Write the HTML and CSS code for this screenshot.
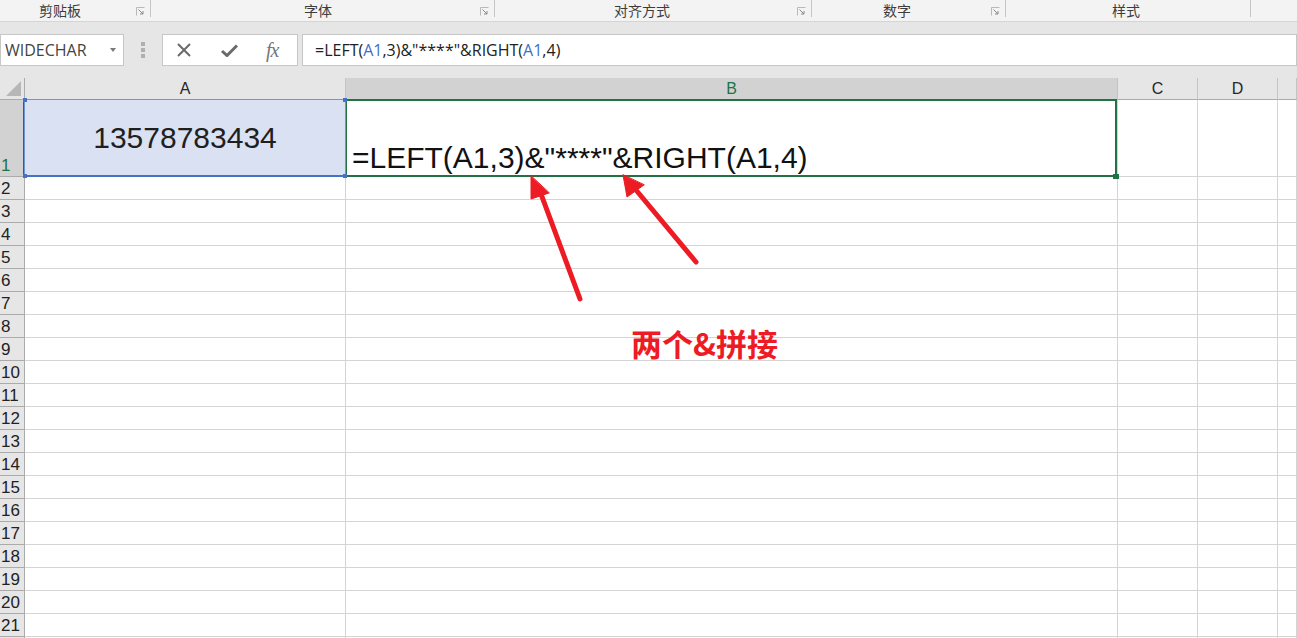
FILE: index.html
```html
<!DOCTYPE html>
<html lang="zh-CN">
<head>
<meta charset="utf-8">
<title>Excel</title>
<link rel="stylesheet" href="styles.css">
</head>
<body>
<div class="app">
  <div class="ribbon">
    <div class="grp g1"><span class="lbl">剪贴板</span><svg class="launch" viewBox="0 0 9 9"><path d="M0.5 8.5V0.5H8.5" fill="none" stroke="#b9b9b9"/><path d="M2.5 2.5L7 7M7 4V7H4" fill="none" stroke="#8a8a8a"/></svg></div>
    <div class="grp g2"><span class="lbl">字体</span><svg class="launch" viewBox="0 0 9 9"><path d="M0.5 8.5V0.5H8.5" fill="none" stroke="#b9b9b9"/><path d="M2.5 2.5L7 7M7 4V7H4" fill="none" stroke="#8a8a8a"/></svg></div>
    <div class="grp g3"><span class="lbl">对齐方式</span><svg class="launch" viewBox="0 0 9 9"><path d="M0.5 8.5V0.5H8.5" fill="none" stroke="#b9b9b9"/><path d="M2.5 2.5L7 7M7 4V7H4" fill="none" stroke="#8a8a8a"/></svg></div>
    <div class="grp g4"><span class="lbl">数字</span><svg class="launch" viewBox="0 0 9 9"><path d="M0.5 8.5V0.5H8.5" fill="none" stroke="#b9b9b9"/><path d="M2.5 2.5L7 7M7 4V7H4" fill="none" stroke="#8a8a8a"/></svg></div>
    <div class="grp g5"><span class="lbl">样式</span></div>
  </div>
  <div class="band"></div>
  <div class="fbar">
    <div class="namebox"><span>WIDECHAR</span><span class="dd"></span></div>
    <div class="grip"><i></i><i></i><i></i></div>
    <div class="fxbox">
      <svg class="ico-x" viewBox="0 0 14 14"><path d="M1 1L13 13M13 1L1 13" stroke="#6a6a6a" stroke-width="2"/></svg>
      <svg class="ico-ok" viewBox="0 0 17 13"><path d="M1 7L6 11.5L16 1.5" fill="none" stroke="#6a6a6a" stroke-width="3"/></svg>
      <span class="fx">fx</span>
    </div>
    <div class="finput">=LEFT(<span class="ref">A1</span>,3)&amp;"****"&amp;RIGHT(<span class="ref">A1</span>,4)</div>
  </div>
  <div class="band"></div>
  <div class="sheet">
    <div class="row hdr"><b class="corner"></b><i>A</i><i class="on">B</i><i>C</i><i>D</i><i></i></div>
    <div class="row r1">
      <b class="on">1</b>
      <i class="a1">13578783434<span class="sel"><u class="h tl"></u><u class="h tr"></u><u class="h bl"></u><u class="h br"></u></span></i>
      <i class="b1">=LEFT(A1,3)&amp;"****"&amp;RIGHT(A1,4)<span class="act"><u class="fill"></u></span></i>
      <i></i><i></i><i></i>
    </div>
    <div class="row"><b>2</b><i></i><i></i><i></i><i></i><i></i></div>
    <div class="row"><b>3</b><i></i><i></i><i></i><i></i><i></i></div>
    <div class="row"><b>4</b><i></i><i></i><i></i><i></i><i></i></div>
    <div class="row"><b>5</b><i></i><i></i><i></i><i></i><i></i></div>
    <div class="row"><b>6</b><i></i><i></i><i></i><i></i><i></i></div>
    <div class="row"><b>7</b><i></i><i></i><i></i><i></i><i></i></div>
    <div class="row"><b>8</b><i></i><i></i><i></i><i></i><i></i></div>
    <div class="row"><b>9</b><i></i><i></i><i></i><i></i><i></i></div>
    <div class="row"><b>10</b><i></i><i></i><i></i><i></i><i></i></div>
    <div class="row"><b>11</b><i></i><i></i><i></i><i></i><i></i></div>
    <div class="row"><b>12</b><i></i><i></i><i></i><i></i><i></i></div>
    <div class="row"><b>13</b><i></i><i></i><i></i><i></i><i></i></div>
    <div class="row"><b>14</b><i></i><i></i><i></i><i></i><i></i></div>
    <div class="row"><b>15</b><i></i><i></i><i></i><i></i><i></i></div>
    <div class="row"><b>16</b><i></i><i></i><i></i><i></i><i></i></div>
    <div class="row"><b>17</b><i></i><i></i><i></i><i></i><i></i></div>
    <div class="row"><b>18</b><i></i><i></i><i></i><i></i><i></i></div>
    <div class="row"><b>19</b><i></i><i></i><i></i><i></i><i></i></div>
    <div class="row"><b>20</b><i></i><i></i><i></i><i></i><i></i></div>
    <div class="row"><b>21</b><i></i><i></i><i></i><i></i><i></i></div>
    <div class="row"><b></b><i></i><i></i><i></i><i></i><i></i></div>
  </div>
  <svg class="arrows" viewBox="0 0 1297 638" width="1297" height="638">
    <g stroke="#ed1c24" stroke-width="5" stroke-linecap="round" fill="#ed1c24">
      <line x1="580" y1="299" x2="541" y2="194"/>
      <polygon points="531,176 531,199 549,193" stroke-width="1" stroke-linejoin="round"/>
      <line x1="696" y1="262" x2="636" y2="190"/>
      <polygon points="623,175 627,197 644,185" stroke-width="1" stroke-linejoin="round"/>
    </g>
  </svg>
  <div class="note">两个&amp;拼接</div>
</div>
</body>
</html>
```
FILE: styles.css
```css
html, body {
  margin: 0;
  padding: 0;
}
body {
  width: 1297px;
  height: 638px;
  overflow: hidden;
  font-family: "Open Sans", "Noto Sans CJK SC", sans-serif;
}
.app {
  position: relative;
  width: 1297px;
  height: 638px;
  background: #e6e6e6;
  overflow: hidden;
}

/* ribbon group labels */
.ribbon {
  display: flex;
  height: 21px;
  background: #f3f3f3;
  border-bottom: 1px solid #d5d5d5;
}
.grp {
  display: grid;
  height: 21px;
  background: linear-gradient(#c6c6c6, #c6c6c6) no-repeat right top / 1px 17px;
}
.grp > * {
  grid-area: 1 / 1;
}
.lbl {
  font: 14px/20px "Noto Sans CJK SC", sans-serif;
  color: #3c3c3c;
  text-align: center;
}
.launch {
  justify-self: end;
  align-self: start;
  width: 9px;
  height: 9px;
  margin: 7px 6px 0 0;
}
.g1 { width: 151px; }
.g1 .lbl { padding-right: 31px; }
.g2 { width: 344px; }
.g2 .lbl { padding-right: 10px; }
.g3 { width: 317px; }
.g3 .lbl { padding-right: 23px; }
.g4 { width: 194px; }
.g4 .lbl { padding-right: 24px; }
.g5 { width: 245px; }
.g5 .lbl { padding-right: 5px; }

.band {
  height: 12px;
}

/* formula bar */
.fbar {
  display: flex;
  height: 32px;
}
.namebox, .fxbox, .finput {
  background: #fff;
  border: 1px solid #c6c6c6;
  box-sizing: border-box;
  height: 32px;
}
.namebox {
  width: 124px;
  display: flex;
  align-items: center;
  justify-content: space-between;
  padding: 0 7px 0 4px;
  font-size: 16px;
  color: #444;
}
.dd {
  width: 0;
  height: 0;
  border-left: 3.5px solid transparent;
  border-right: 3.5px solid transparent;
  border-top: 4px solid #7a7a7a;
}
.grip {
  width: 38px;
  display: flex;
  flex-direction: column;
  align-items: center;
  justify-content: center;
  gap: 2px;
}
.grip i {
  width: 4px;
  height: 4px;
  background: #b0b0b0;
}
.fxbox {
  width: 136px;
  display: flex;
  align-items: center;
  padding-left: 14px;
}
.ico-x {
  width: 14px;
  height: 14px;
}
.ico-ok {
  width: 17px;
  height: 13px;
  margin-left: 30px;
}
.fx {
  margin-left: 28px;
  font: italic 20px "Liberation Serif", serif;
  color: #777;
  letter-spacing: -1px;
}
.finput {
  flex: 1;
  margin-left: 4px;
  display: flex;
  align-items: center;
  padding-left: 12px;
  font-size: 16px;
  color: #222;
  white-space: pre;
}
.ref {
  color: #3f6fc2;
}

/* sheet */
.sheet {
  background: #fff;
}
.row {
  display: grid;
  grid-template-columns: 25px 321px 772px 80px 80px 1fr;
  height: 23px;
}
.row > * {
  box-sizing: border-box;
  border-right: 1px solid #d4d4d4;
  border-bottom: 1px solid #d4d4d4;
  font-style: normal;
  font-weight: normal;
}
.row > b {
  background: #e6e6e6;
  border-right-color: #ababab;
  border-bottom-color: #ababab;
  font: 17px/1 "Liberation Sans", sans-serif;
  color: #222;
  display: flex;
  align-items: flex-end;
  padding: 0 0 2px 1px;
}
.hdr {
  height: 22px;
}
.hdr > i {
  background: #e6e6e6;
  border-right-color: #c4c4c4;
  border-bottom-color: #ababab;
  font: 16px/21px "Liberation Sans", sans-serif;
  color: #262626;
  text-align: center;
}
.hdr > i.on {
  background: #d2d2d2;
  color: #217346;
}
.hdr > b.corner {
  position: relative;
}
.corner::after {
  content: "";
  position: absolute;
  right: 3px;
  bottom: 3px;
  width: 15px;
  height: 15px;
  background: #b7b7b7;
  clip-path: polygon(100% 0, 100% 100%, 0 100%);
}
.r1 {
  height: 77px;
}
.r1 > b.on {
  background: #d2d2d2;
  color: #217346;
  border-right: 2px solid #217346;
}
.a1 {
  position: relative;
  background: #d9e1f2;
  display: flex;
  align-items: center;
  justify-content: center;
  font: 30px "Liberation Sans", sans-serif;
  color: #1f1f1f;
}
.sel {
  position: absolute;
  top: -1px;
  left: -1px;
  right: -1px;
  bottom: -1px;
  border: 1px solid #6f95d6;
  border-bottom: 2px solid #4472c4;
  z-index: 3;
}
.h {
  position: absolute;
  width: 4px;
  height: 4px;
  background: #4472c4;
}
.tl { left: -2px; top: -2px; }
.tr { right: -2px; top: -2px; }
.bl { left: -2px; bottom: -3px; }
.br { right: -2px; bottom: -3px; }
.b1 {
  position: relative;
  display: flex;
  align-items: flex-end;
  padding: 0 0 3px 6px;
  font: 30px/1 "Liberation Sans", sans-serif;
  color: #111;
  white-space: pre;
}
.act {
  position: absolute;
  top: -1px;
  left: -1px;
  right: 0;
  bottom: -1px;
  border: 2px solid #217346;
  z-index: 2;
}
.fill {
  position: absolute;
  right: -4px;
  bottom: -4px;
  width: 6px;
  height: 5px;
  background: #217346;
}

/* annotation */
.arrows {
  position: absolute;
  left: 0;
  top: 0;
  z-index: 5;
  pointer-events: none;
}
.note {
  position: absolute;
  left: 631px;
  top: 324px;
  z-index: 5;
  font: 700 31px/1.2 "Noto Sans CJK SC", sans-serif;
  color: #ed1c24;
  white-space: nowrap;
}
```
